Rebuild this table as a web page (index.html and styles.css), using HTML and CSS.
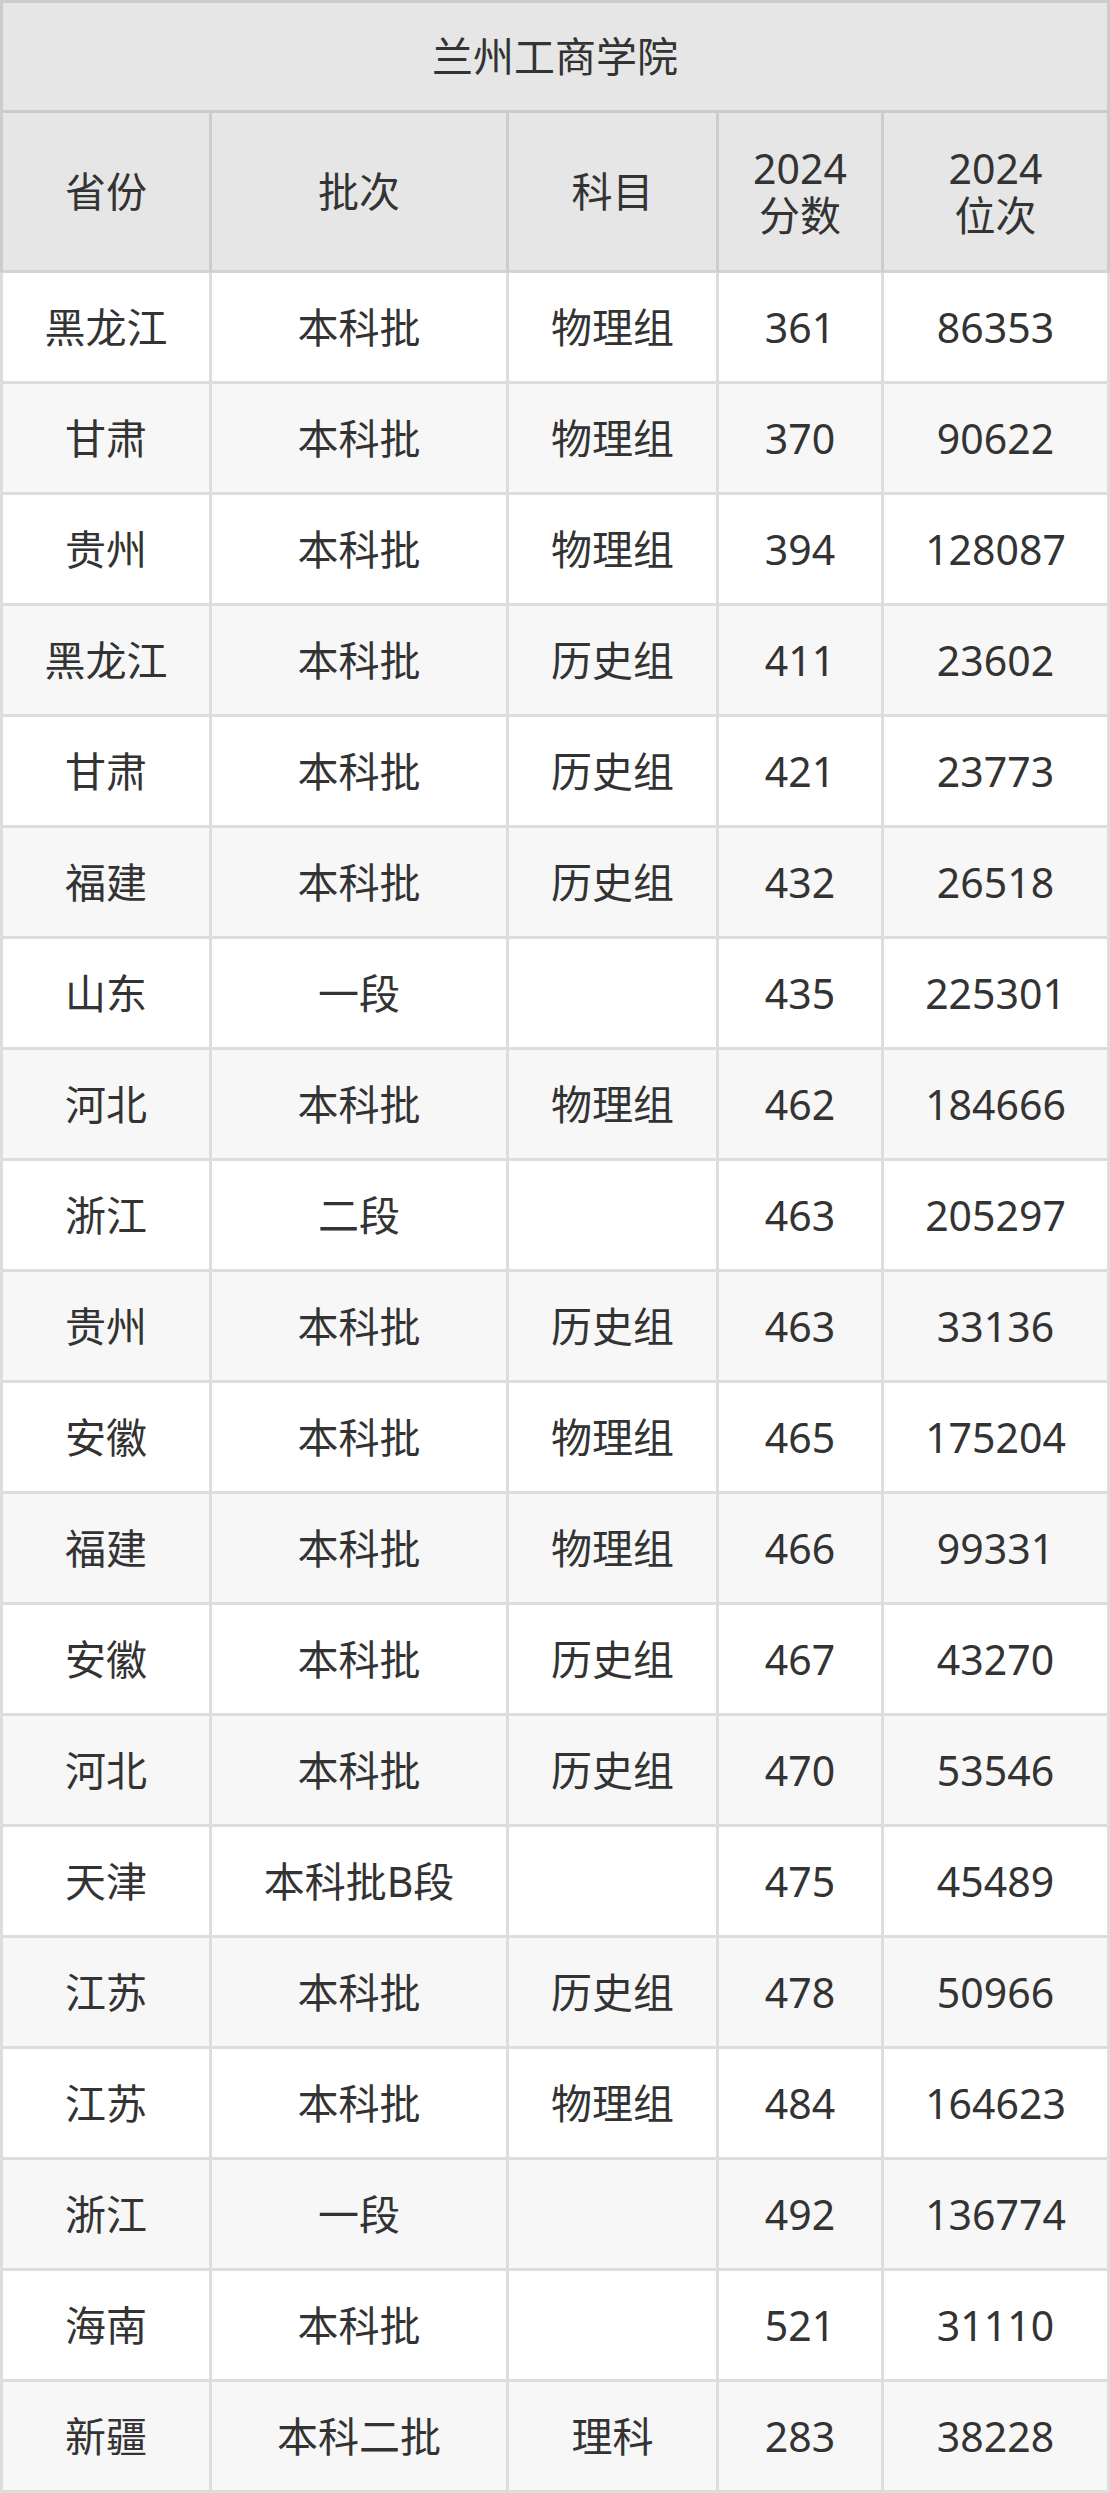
FILE: index.html
```html
<!DOCTYPE html>
<html lang="zh">
<head>
<meta charset="utf-8">
<title>兰州工商学院</title>
<link rel="stylesheet" href="styles.css">
</head>
<body>
<div class="table">
  <div class="cell title">兰州工商学院</div>
  <div class="cell head first">省份</div>
  <div class="cell head">批次</div>
  <div class="cell head">科目</div>
  <div class="cell head">2024<br>分数</div>
  <div class="cell head">2024<br>位次</div>

  <div class="cell first">黑龙江</div><div class="cell">本科批</div><div class="cell">物理组</div><div class="cell">361</div><div class="cell">86353</div>
  <div class="cell first alt">甘肃</div><div class="cell alt">本科批</div><div class="cell alt">物理组</div><div class="cell alt">370</div><div class="cell alt">90622</div>
  <div class="cell first">贵州</div><div class="cell">本科批</div><div class="cell">物理组</div><div class="cell">394</div><div class="cell">128087</div>
  <div class="cell first alt">黑龙江</div><div class="cell alt">本科批</div><div class="cell alt">历史组</div><div class="cell alt">411</div><div class="cell alt">23602</div>
  <div class="cell first">甘肃</div><div class="cell">本科批</div><div class="cell">历史组</div><div class="cell">421</div><div class="cell">23773</div>
  <div class="cell first alt">福建</div><div class="cell alt">本科批</div><div class="cell alt">历史组</div><div class="cell alt">432</div><div class="cell alt">26518</div>
  <div class="cell first">山东</div><div class="cell">一段</div><div class="cell"></div><div class="cell">435</div><div class="cell">225301</div>
  <div class="cell first alt">河北</div><div class="cell alt">本科批</div><div class="cell alt">物理组</div><div class="cell alt">462</div><div class="cell alt">184666</div>
  <div class="cell first">浙江</div><div class="cell">二段</div><div class="cell"></div><div class="cell">463</div><div class="cell">205297</div>
  <div class="cell first alt">贵州</div><div class="cell alt">本科批</div><div class="cell alt">历史组</div><div class="cell alt">463</div><div class="cell alt">33136</div>
  <div class="cell first">安徽</div><div class="cell">本科批</div><div class="cell">物理组</div><div class="cell">465</div><div class="cell">175204</div>
  <div class="cell first alt">福建</div><div class="cell alt">本科批</div><div class="cell alt">物理组</div><div class="cell alt">466</div><div class="cell alt">99331</div>
  <div class="cell first">安徽</div><div class="cell">本科批</div><div class="cell">历史组</div><div class="cell">467</div><div class="cell">43270</div>
  <div class="cell first alt">河北</div><div class="cell alt">本科批</div><div class="cell alt">历史组</div><div class="cell alt">470</div><div class="cell alt">53546</div>
  <div class="cell first">天津</div><div class="cell">本科批B段</div><div class="cell"></div><div class="cell">475</div><div class="cell">45489</div>
  <div class="cell first alt">江苏</div><div class="cell alt">本科批</div><div class="cell alt">历史组</div><div class="cell alt">478</div><div class="cell alt">50966</div>
  <div class="cell first">江苏</div><div class="cell">本科批</div><div class="cell">物理组</div><div class="cell">484</div><div class="cell">164623</div>
  <div class="cell first alt">浙江</div><div class="cell alt">一段</div><div class="cell alt"></div><div class="cell alt">492</div><div class="cell alt">136774</div>
  <div class="cell first">海南</div><div class="cell">本科批</div><div class="cell"></div><div class="cell">521</div><div class="cell">31110</div>
  <div class="cell first alt">新疆</div><div class="cell alt">本科二批</div><div class="cell alt">理科</div><div class="cell alt">283</div><div class="cell alt">38228</div>
</div>
</body>
</html>
```

FILE: styles.css
```css
html, body {
  margin: 0;
  padding: 0;
  background: #ffffff;
}

.table {
  display: grid;
  grid-template-columns: 212px 297px 210px 165px 226px;
  grid-template-rows: 113px 160px repeat(20, 111px);
  width: 1110px;
  font-family: "Noto Sans", "Noto Sans CJK SC", sans-serif;
  font-size: 41px;
  line-height: 47px;
  color: #333333;
}

.cell {
  box-sizing: border-box;
  display: flex;
  align-items: center;
  justify-content: center;
  text-align: center;
  border-right: 3px solid #dddddd;
  border-bottom: 3px solid #dddddd;
  background: #ffffff;
}

.cell.first {
  border-left: 3px solid #dddddd;
}

.cell.alt {
  background: #f7f7f7;
}

.cell.title {
  grid-column: 1 / -1;
  background: #e6e6e6;
  border: 3px solid #cccccc;
}

.cell.head {
  background: #e6e6e6;
  border-right-color: #cccccc;
  border-bottom-color: #d4d4d4;
}

.cell.head.first {
  border-left-color: #cccccc;
}
```
